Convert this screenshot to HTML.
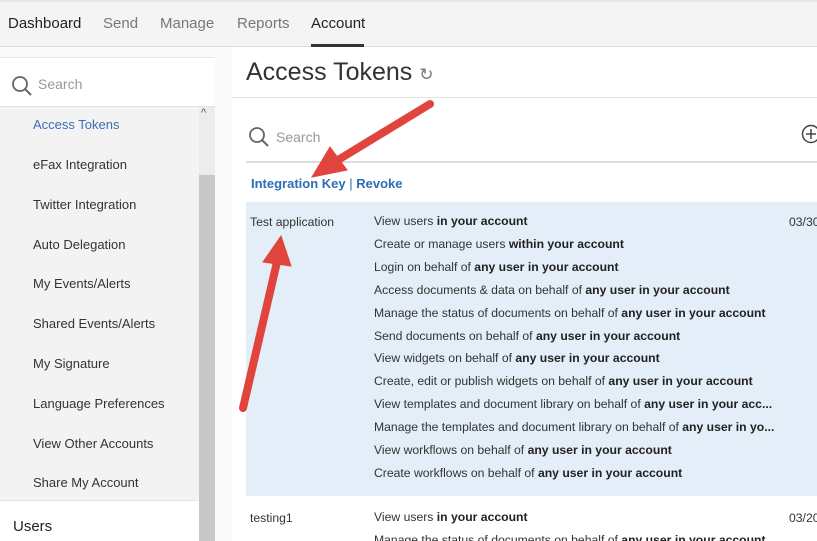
<!DOCTYPE html>
<html style="overflow:hidden;width:817px;height:541px"><head><style>
*{margin:0;padding:0;box-sizing:border-box}
body{width:817px;height:541px;overflow:hidden;background:#fafafa;font-family:"Liberation Sans",sans-serif;position:relative;color:#333}
.nav{position:absolute;left:0;top:0;width:817px;height:47px;background:#f4f4f4;border-bottom:1px solid #ddd;border-top:2px solid #e6e6e6}
.nav span{position:absolute;top:13px;font-size:15px;color:#777}
.side{position:absolute;left:0;top:57px;width:215px;height:484px;background:#f3f3f3;overflow:hidden}
.ss{position:absolute;left:0;top:0;width:215px;height:50px;background:#fff;border-top:1px solid #e6e6e6;border-bottom:1px solid #e3e3e3}
.item{position:absolute;left:33px;font-size:13px;color:#333}
.track{position:absolute;left:199px;top:50px;width:16px;height:434px;background:#ececec}
.thumb{position:absolute;left:199px;top:118px;width:16px;height:366px;background:#c8c8c8}
.main{position:absolute;left:232px;top:47px;width:585px;height:494px;background:#fff}
.row{position:absolute;font-size:12.2px;color:#333;white-space:nowrap}
b{font-weight:bold;color:#222}
</style></head><body>
<div class="nav">
<span style="left:8px;color:#222">Dashboard</span>
<span style="left:103px">Send</span>
<span style="left:160px">Manage</span>
<span style="left:237px">Reports</span>
<span style="left:311px;color:#222">Account</span>
<div style="position:absolute;left:311px;top:42px;width:53px;height:3px;background:#333"></div>
</div>
<div class="side">
<div class="ss">
<svg style="position:absolute;left:11px;top:17px" width="22" height="22" viewBox="0 0 22 22"><circle cx="9" cy="9" r="7" fill="none" stroke="#666" stroke-width="1.8"/><line x1="14" y1="14" x2="20" y2="20" stroke="#666" stroke-width="2"/></svg>
<span style="position:absolute;left:38px;top:18px;font-size:14px;color:#999">Search</span>
</div>
<div class="track"></div><div class="thumb"></div>
<span style="position:absolute;left:201px;top:50px;font-size:11px;color:#555">&#94;</span>
<div class="item" style="top:60px;color:#3a6fb8">Access Tokens</div>
<div class="item" style="top:100px">eFax Integration</div>
<div class="item" style="top:140px">Twitter Integration</div>
<div class="item" style="top:180px">Auto Delegation</div>
<div class="item" style="top:219px">My Events/Alerts</div>
<div class="item" style="top:259px">Shared Events/Alerts</div>
<div class="item" style="top:299px">My Signature</div>
<div class="item" style="top:339px">Language Preferences</div>
<div class="item" style="top:379px">View Other Accounts</div>
<div class="item" style="top:418px">Share My Account</div>
<div style="position:absolute;left:0;top:443px;width:199px;height:41px;background:#fff;border-top:1px solid #e3e3e3"></div>
<div class="item" style="top:461px;left:13px;font-size:15px;color:#222">Users</div>
</div>
<div class="main">
<div style="position:absolute;left:14px;top:11px;font-size:25px;color:#333">Access Tokens <span style="font-size:17px;color:#777">&#x21bb;</span></div>
<div style="position:absolute;left:0;top:50px;width:585px;height:1px;background:#e3e3e3"></div>
<svg style="position:absolute;left:16px;top:79px" width="22" height="22" viewBox="0 0 22 22"><circle cx="9" cy="9" r="7" fill="none" stroke="#666" stroke-width="1.8"/><line x1="14" y1="14" x2="20" y2="20" stroke="#666" stroke-width="2"/></svg>
<span style="position:absolute;left:44px;top:82px;font-size:14px;color:#999">Search</span>
<svg style="position:absolute;left:569px;top:77px" width="20" height="20" viewBox="0 0 20 20"><circle cx="10" cy="10" r="8.5" fill="none" stroke="#444" stroke-width="1.5"/><line x1="10" y1="5" x2="10" y2="15" stroke="#444" stroke-width="1.5"/><line x1="5" y1="10" x2="15" y2="10" stroke="#444" stroke-width="1.5"/></svg>
<div style="position:absolute;left:14px;top:114px;width:571px;height:2px;background:#ddd"></div>
<div style="position:absolute;left:19px;top:129px;font-size:13px;font-weight:bold;color:#2c6db5">Integration Key <span style="font-weight:normal">|</span> Revoke</div>
<div style="position:absolute;left:14px;top:155px;width:571px;height:294px;background:#e3eef8"></div>
</div>
<div class="row" style="left:250px;top:215px">Test application</div>
<div class="row" style="left:789px;top:215px">03/30</div>
<div class="row" style="left:374px;top:210px;line-height:22.9px">
View users <b>in your account</b><br>
Create or manage users <b>within your account</b><br>
Login on behalf of <b>any user in your account</b><br>
Access documents &amp; data on behalf of <b>any user in your account</b><br>
Manage the status of documents on behalf of <b>any user in your account</b><br>
Send documents on behalf of <b>any user in your account</b><br>
View widgets on behalf of <b>any user in your account</b><br>
Create, edit or publish widgets on behalf of <b>any user in your account</b><br>
View templates and document library on behalf of <b>any user in your acc...</b><br>
Manage the templates and document library on behalf of <b>any user in yo...</b><br>
View workflows on behalf of <b>any user in your account</b><br>
Create workflows on behalf of <b>any user in your account</b>
</div>
<div class="row" style="left:250px;top:511px">testing1</div>
<div class="row" style="left:789px;top:511px">03/20</div>
<div class="row" style="left:374px;top:506px;line-height:22.9px">View users <b>in your account</b><br>Manage the status of documents on behalf of <b>any user in your account</b></div>
<svg style="position:absolute;left:0;top:0" width="817" height="541">
<g fill="#e0443c" stroke="#e0443c" stroke-linecap="round">
<line x1="430" y1="104" x2="338" y2="160" stroke-width="8"/>
<polygon points="312,177 330,147 347,170"/>
<line x1="243" y1="408" x2="277" y2="262" stroke-width="8"/>
<polygon points="281,236 263,262 291,266"/>
</g>
</svg>
</body></html>
